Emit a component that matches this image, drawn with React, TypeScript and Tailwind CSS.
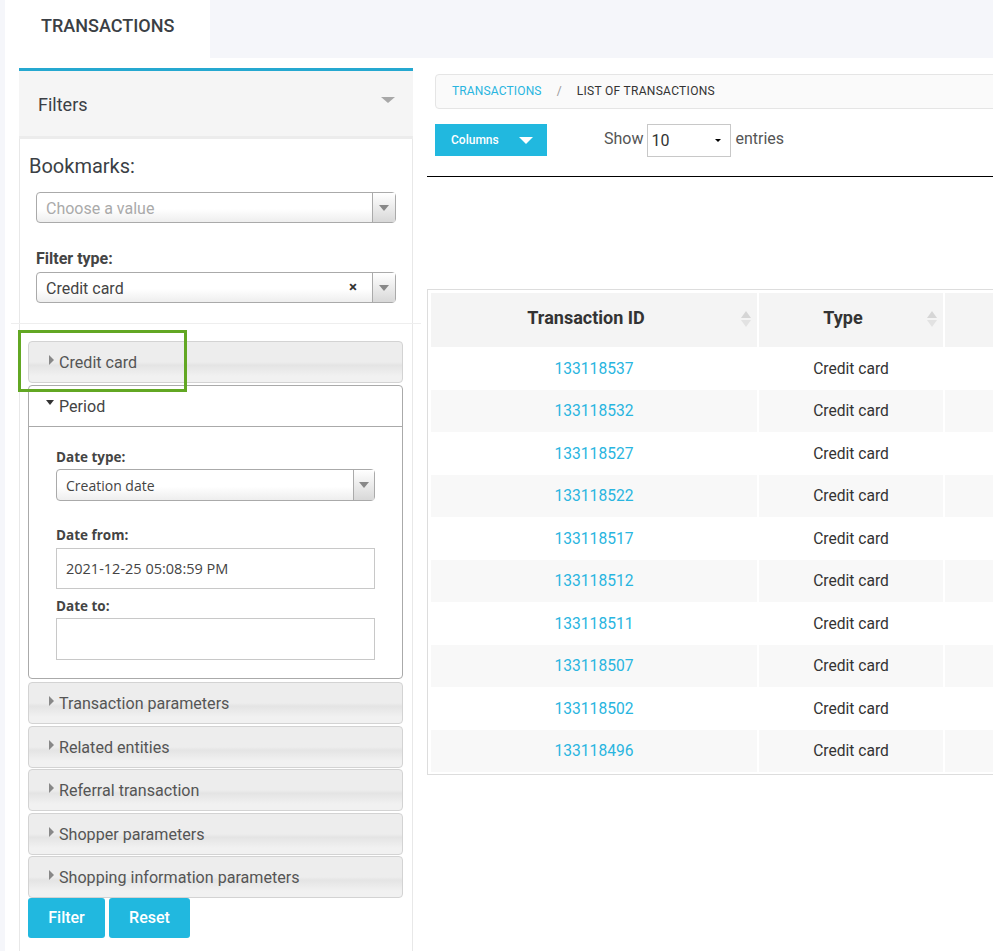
const FONT = "font-['Roboto',sans-serif]";
const rows = ['133118537', '133118532', '133118527', '133118522', '133118517', '133118512', '133118511', '133118507', '133118502', '133118496'];
const lowerSections = ['Transaction parameters', 'Related entities', 'Referral transaction', 'Shopper parameters', 'Shopping information parameters'];

function ComboBox({ text, placeholder, clearable, small }: { text: string; placeholder?: boolean; clearable?: boolean; small?: boolean }) {
  return (
    <div className={`flex rounded-[4px] border border-[#aaaaaa] bg-[linear-gradient(#ffffff_55%,#eeeeee)] ${small ? 'h-[32px]' : 'h-[31px]'}`}>
      <span
        className={`flex-1 ${small ? "pl-[9px] font-['Open_Sans',sans-serif] text-[14px] leading-[31px] text-[#444444]" : 'pl-[9px] text-[16px] leading-[32px]'} ${placeholder ? 'text-[#aaaaaa]' : 'text-[#444444]'}`}
      >
        {text}
      </span>
      {clearable && <span className="mr-[15px] text-[15px] leading-[29px] font-bold text-[#333333]">×</span>}
      <span className={`flex items-center justify-center border-l border-[#aaaaaa] bg-[linear-gradient(#ffffff,#d8d8d8)] ${small ? 'w-[21px]' : 'w-[23px]'}`}>
        <span className="h-0 w-0 border-x-[5px] border-t-[6px] border-x-transparent border-t-[#888888]" />
      </span>
    </div>
  );
}

function SectionHeader({ label }: { label: string }) {
  return (
    <div className="flex h-[42px] items-start rounded-[4px] border border-[#d3d3d3] bg-[linear-gradient(#ededed_50%,#e4e4e4_58%,#f1f1f1_85%)] pt-[10px] pl-[20px] text-[16.1px] leading-[22px] text-[#555555]">
      <span className="mt-[3px] mr-[5px] h-0 w-0 border-y-[5px] border-l-[5px] border-y-transparent border-l-[#888888]" />
      {label}
    </div>
  );
}

function Sidebar() {
  return (
    <aside className="ml-[19px] flex w-[394px] shrink-0 flex-col border-x border-[#e8e8e8]">
      {/* Header */}
      <div className="-mx-px flex h-[71px] shrink-0 justify-between border-t-[3px] border-b-[3px] border-t-[#25a8d0] border-b-[#ececec] bg-[#f5f5f5] pt-[22px] pr-[18px] pl-[19px]">
        <span className="text-[18px] leading-[24px] text-[#3b3f45]">Filters</span>
        <span className="mt-[4px] h-0 w-0 border-x-[7px] border-t-[6px] border-x-transparent border-t-[#a8a8a8]" />
      </div>

      <div className="px-[9px] pt-[14px] text-[20px] leading-[26px] text-[#3b3f45]">Bookmarks:</div>
      <div className="mx-[16px] mt-[13px]">
        <ComboBox text="Choose a value" placeholder />
      </div>
      <div className="mx-[16px] mt-[25px] text-[16px] leading-[22px] font-bold text-[#444444]">Filter type:</div>
      <div className="mx-[16px] mt-[2px]">
        <ComboBox text="Credit card" clearable />
      </div>
      <div className="-mx-[9px] mt-[20px] h-px shrink-0 bg-[#eeeeee]" />

      {/* Sections */}
      <div className="mx-[8px] mt-[17px] flex w-[375px] flex-col">
        <SectionHeader label="Credit card" />
        <div className="mt-[2px] h-[294px] rounded-[4px] border border-[#aaaaaa] bg-white">
          <div className="flex h-[41px] border-b border-[#aaaaaa] pt-[10px] pl-[17px] text-[16.1px] leading-[22px] text-[#444444]">
            <span className="mt-[4px] mr-[5px] h-0 w-0 border-x-[4px] border-t-[5px] border-x-transparent border-t-[#333333]" />
            Period
          </div>
          <div className="px-[27px] pt-[21px] font-['Open_Sans',sans-serif] text-[13.5px] text-[#444444]">
            <div className="leading-[18px] font-bold">Date type:</div>
            <div className="mt-[3px]">
              <ComboBox text="Creation date" small />
            </div>
            <div className="mt-[25px] leading-[18px] font-bold">Date from:</div>
            <div className="mt-[4px] h-[41px] border border-[#c8c8c8] pl-[9px] text-[14.5px] leading-[39px]">2021-12-25 05:08:59 PM</div>
            <div className="mt-[8px] leading-[18px] font-bold">Date to:</div>
            <div className="mt-[3px] h-[42px] border border-[#c8c8c8]" />
          </div>
        </div>
        <div className="mt-[3px] flex flex-col gap-[1.5px]">
          {lowerSections.map((label) => (
            <SectionHeader key={label} label={label} />
          ))}
        </div>
        <div className="flex gap-[4px]">
          <button className="h-[40px] w-[77px] rounded-[3px] bg-[#21b8df] text-[16px] font-medium text-white">Filter</button>
          <button className="h-[40px] w-[81px] rounded-[3px] bg-[#21b8df] text-[16px] font-medium text-white">Reset</button>
        </div>
      </div>
    </aside>
  );
}

function HeadCell({ label, width }: { label: string; width: string }) {
  return (
    <th className={`relative h-[54px] bg-[#f4f4f4] pr-[16px] pb-[6px] text-center text-[18px] font-bold text-[#333333] ${width}`}>
      {label}
      <svg className="absolute top-[18px] right-[6.5px] h-[16px] w-[10px]" viewBox="0 0 10 16">
        <path d="M5 0L10 7H0Z" fill="#d6d6d6" />
        <path d="M5 16L0 9H10Z" fill="#e2e2e2" />
      </svg>
    </th>
  );
}

function TransactionsTable() {
  return (
    <div className="mt-[112px] w-[640px] border border-[#dddddd] px-px pt-[3px] pb-[2px]">
      <table className="w-full table-fixed border-separate border-spacing-x-[2px] border-spacing-y-0 text-[15.6px] text-[#333333]">
        <thead>
          <tr>
            <HeadCell label="Transaction ID" width="w-[326px]" />
            <HeadCell label="Type" width="w-[184px]" />
            <th className="bg-[#f4f4f4]" />
          </tr>
        </thead>
        <tbody>
          {rows.map((id, i) => (
            <tr key={id} className="h-[42.5px]">
              <td className={`pt-[2px] text-center text-[#29b5e0] ${i % 2 ? 'bg-[#f8f8f8]' : ''}`}>{id}</td>
              <td className={`pt-[2px] text-center ${i % 2 ? 'bg-[#f8f8f8]' : ''}`}>Credit card</td>
              <td className={i % 2 ? 'bg-[#f8f8f8]' : ''} />
            </tr>
          ))}
        </tbody>
      </table>
    </div>
  );
}

export default function App() {
  return (
    <div className={`relative h-[951px] w-[993px] overflow-hidden bg-white ${FONT}`}>
      {/* Top tabs */}
      <div className="flex h-[58px] bg-[#f5f6fa]">
        <div className="ml-[5px] w-[205px] bg-white pt-[14px] pl-[36px] text-[18px] leading-[24px] font-medium text-[#3b3f45]">TRANSACTIONS</div>
      </div>

      <div className="flex h-[893px] pt-[10px]">
        <Sidebar />
        <main className="ml-[14px] w-[640px] shrink-0">
          <div className="mt-[6px] ml-[8px] flex h-[35px] w-[640px] items-center rounded-[4px] border border-[#e5e5e5] bg-[#fafafa] pb-[2px] pl-[16px] text-[12px] tracking-[0.15px]">
            <span className="text-[#29b5e0]">TRANSACTIONS</span>
            <span className="mx-[15px] text-[#999999]">/</span>
            <span className="tracking-[0.3px] text-[#333333]">LIST OF TRANSACTIONS</span>
          </div>
          <div className="mt-[15px] ml-[8px] flex h-[33px] items-start text-[16px] text-[#555555]">
            <button className="flex h-[32px] w-[112px] items-center gap-[20px] bg-[#21b8df] pl-[16px] text-[12px] font-medium text-white">
              Columns
              <span className="h-0 w-0 border-x-[7px] border-t-[7px] border-x-transparent border-t-white" />
            </button>
            <span className="ml-[57px] leading-[29px]">Show</span>
            <div className="ml-[4px] flex h-[33px] w-[84px] items-center justify-between border border-[#c8c8c8] pr-[9px] pl-[3px] text-[#333333]">
              10
              <span className="h-0 w-0 border-x-[3px] border-t-[3px] border-x-transparent border-t-black" />
            </div>
            <span className="ml-[4px] leading-[29px]">entries</span>
          </div>
          <div className="mt-[19px] h-px w-[640px] bg-black" />
          <TransactionsTable />
        </main>
      </div>

      {/* Green highlight over the first section */}
      <div className="absolute top-[330px] left-[18px] h-[62px] w-[169px] border-[3px] border-[#62a723]" />
      <div className="absolute top-[58px] left-0 h-[893px] w-[5px] bg-[#f5f6fa]" />
    </div>
  );
}
